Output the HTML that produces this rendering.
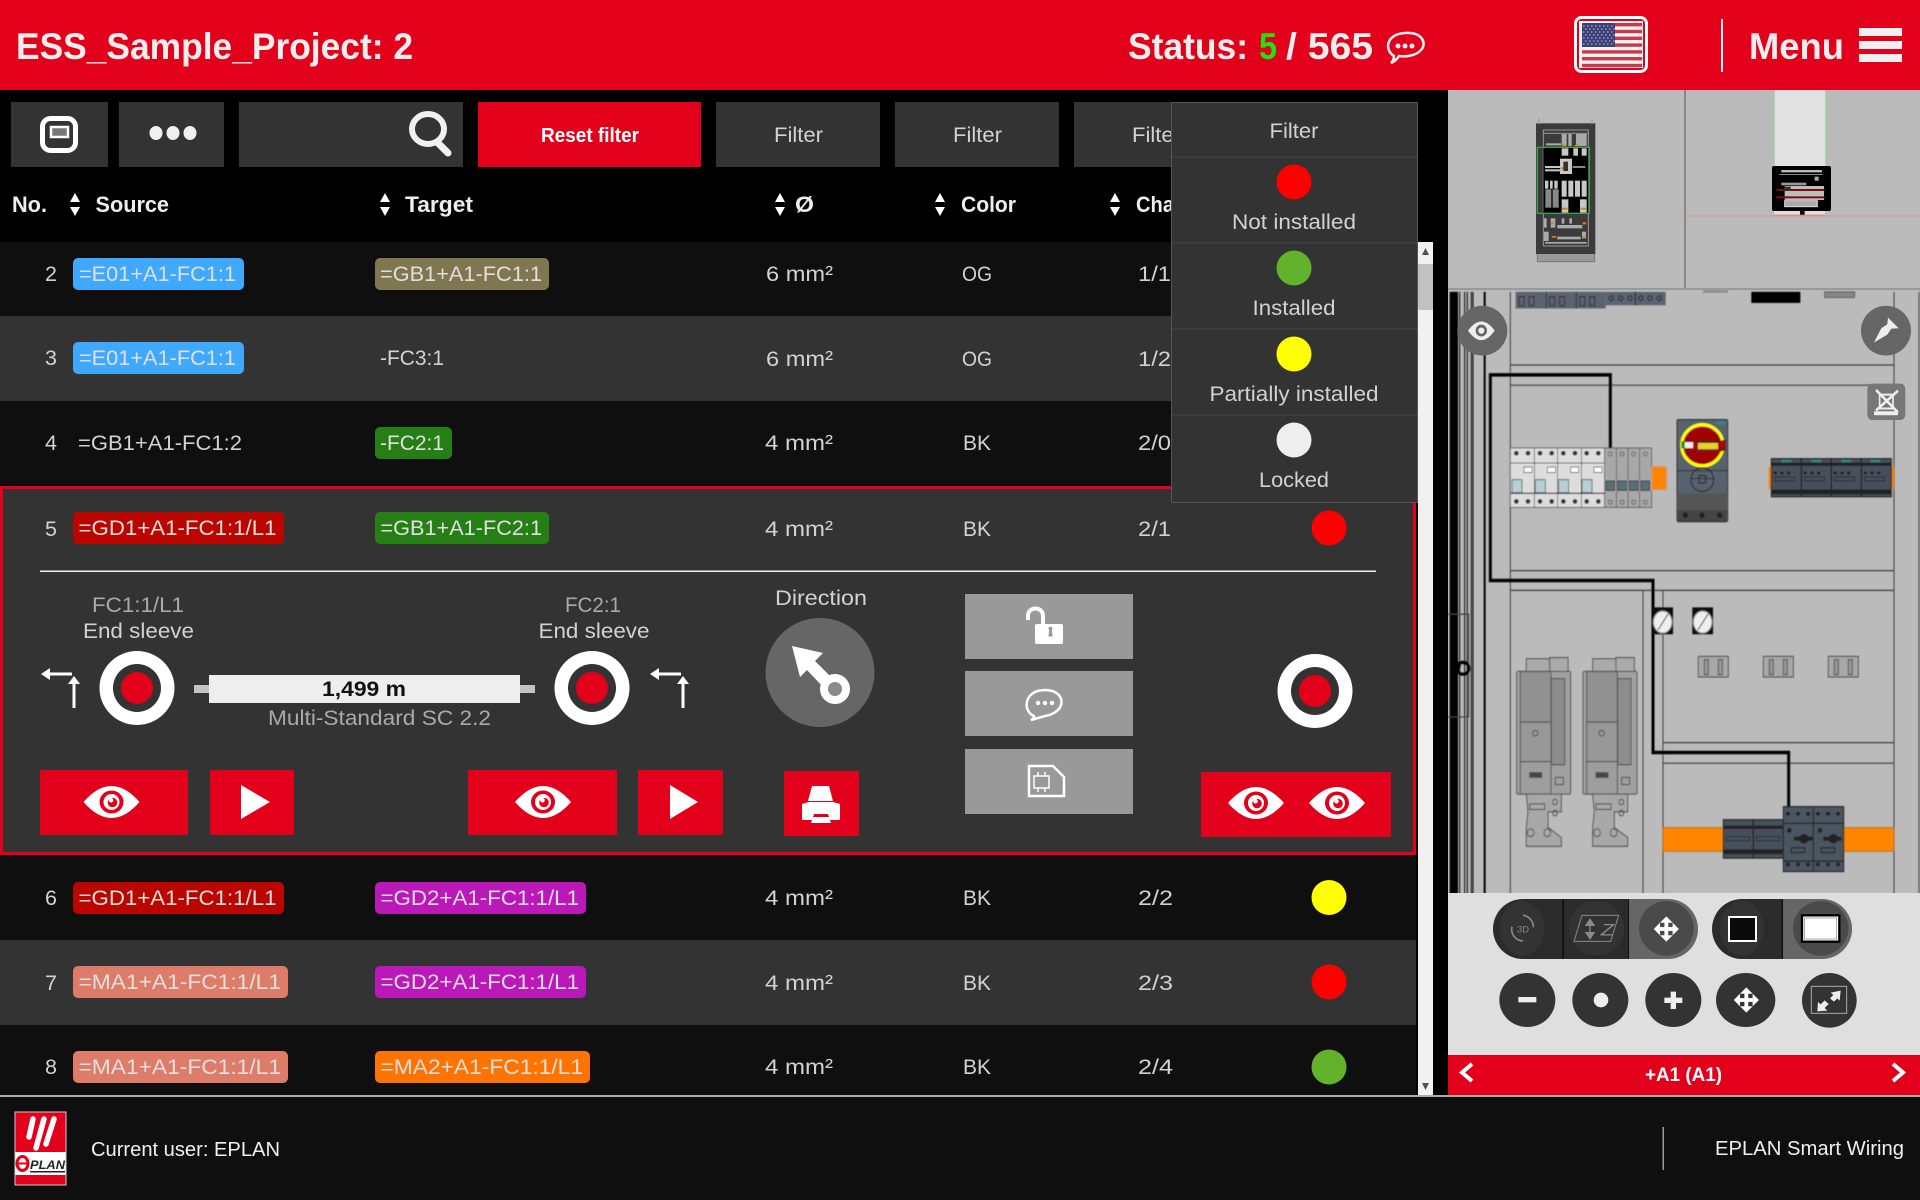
<!DOCTYPE html>
<html lang="en"><head><meta charset="utf-8"><title>ESS_Sample_Project: 2</title>
<style>
html,body{margin:0;padding:0;background:#000;width:1920px;height:1200px;overflow:hidden}
svg{display:block;position:absolute;left:0;top:0}
text{font-family:"Liberation Sans",Arial,sans-serif;font-size:21.5px;fill:#d2d2d2}
.b{font-weight:bold;fill:#eee}
.w{fill:#f0f0f0}
.p{fill:#e0e0e0}
</style></head><body>
<svg width="1920" height="1200" viewBox="0 0 1920 1200" xmlns="http://www.w3.org/2000/svg">
<defs>
<filter id="bl" x="-5%" y="-5%" width="110%" height="110%"><feGaussianBlur stdDeviation="0.45"/></filter>
<g id="eye"><path d="M-28 0Q-14-16 0-16Q14-16 28 0Q14 16 0 16Q-14 16-28 0Z" fill="#fff"/><ellipse rx="12" ry="11.500" fill="#e2001a"/><circle r="8" fill="#fff"/><circle cx="1" cy=".500" r="4.800" fill="#e2001a"/><circle cx="-.500" cy="-1.800" r="2.300" fill="#fff"/></g>
<g id="ring"><ellipse rx="37.5" ry="37" fill="#fff"/><circle r="24" fill="#333"/><circle r="16" fill="#e2001a"/></g>
<g id="sort"><path d="M0-12L5-3H-5Z" fill="#fff"/><path d="M0 11L5 2H-5Z" fill="#fff"/></g>
<g id="arrows" stroke="#fff" stroke-width="3" fill="#fff"><path d="M8 0H31" fill="none"/><path d="M0 0L9-6V6Z" stroke="none"/><path d="M33 7V34" fill="none"/><path d="M33 2L39 10H27Z" stroke="none"/></g>
<g id="move"><path d="M0-13L13 0L0 13L-13 0Z" fill="#fff"/><g fill="currentColor"><rect x="-6.500" y="-6.500" width="4.500" height="4.500"/><rect x="2" y="-6.500" width="4.500" height="4.500"/><rect x="-6.500" y="2" width="4.500" height="4.500"/><rect x="2" y="2" width="4.500" height="4.500"/></g></g>
<clipPath id="mv"><rect x="1448" y="290" width="472" height="603"/></clipPath>
</defs>

<rect width="1920" height="1200" fill="#000"/>
<!-- header -->
<rect width="1920" height="90" fill="#e2001a"/>
<text x="16" y="59" class="b" style="font-size:37px" textLength="397" lengthAdjust="spacingAndGlyphs">ESS_Sample_Project: 2</text>
<text x="1128" y="59" class="b" style="font-size:37px" textLength="120" lengthAdjust="spacingAndGlyphs">Status:</text>
<text x="1259" y="59" class="b" style="font-size:37px;fill:#22e012" textLength="18" lengthAdjust="spacingAndGlyphs">5</text>
<text x="1286" y="59" class="b" style="font-size:37px" textLength="87" lengthAdjust="spacingAndGlyphs">/ 565</text>
<g fill="none" stroke="#f0f0f0" stroke-width="2.500"><path d="M1394 56C1384 50 1386 34 1405 33C1423 32 1427 44 1421 50C1416 56 1405 57 1399 56Q1396 61 1391 63Q1394 60 1394 56Z"/></g>
<g fill="#f0f0f0"><circle cx="1398" cy="46" r="2.500"/><circle cx="1405" cy="46" r="2.500"/><circle cx="1412" cy="46" r="2.500"/></g>
<rect x="1575.500" y="17.500" width="71" height="54" rx="6" fill="#e2001a" stroke="#fff" stroke-width="3"/>
<rect x="1579" y="21" width="64" height="47" fill="#f4f4f4"/>
<g fill="#c9394a"><rect x="1582" y="23" width="60" height="3.400"/><rect x="1582" y="29.800" width="60" height="3.400"/><rect x="1582" y="36.600" width="60" height="3.400"/><rect x="1582" y="43.400" width="60" height="3.400"/><rect x="1582" y="50.200" width="60" height="3.400"/><rect x="1582" y="57" width="60" height="3.400"/><rect x="1582" y="63.800" width="60" height="3.400"/></g>
<rect x="1582" y="23" width="33" height="24" fill="#3c3f78"/>
<g stroke="#c6c8e0" stroke-width="1" stroke-dasharray="1.500 2.500"><path d="M1583 26H1615M1585 29H1615M1583 32H1615M1585 35H1615M1583 38H1615M1585 41H1615M1583 44H1615"/></g>
<rect x="1721" y="19" width="2" height="53" fill="#f4f4f4"/>
<text x="1749" y="59" class="b" style="font-size:37px" textLength="95" lengthAdjust="spacingAndGlyphs">Menu</text>
<g fill="#f0f0f0"><rect x="1859" y="28" width="43" height="8"/><rect x="1859" y="41" width="43" height="8"/><rect x="1859" y="54" width="43" height="8"/></g>

<!-- toolbar -->
<g fill="#333"><rect x="11" y="102" width="97" height="65"/><rect x="119" y="102" width="105" height="65"/><rect x="239" y="102" width="224" height="65"/><rect x="716" y="102" width="164" height="65"/><rect x="895" y="102" width="164" height="65"/><rect x="1074" y="102" width="165" height="65"/></g>
<rect x="478" y="102" width="223" height="65" fill="#e2001a"/>
<rect x="42.500" y="118.500" width="33" height="32" rx="8" fill="#333" stroke="#fff" stroke-width="5"/>
<rect x="51" y="127" width="17" height="10" fill="#777" stroke="#fff" stroke-width="2.500"/>
<g fill="#f0f0f0"><ellipse cx="156" cy="133" rx="6.500" ry="7"/><ellipse cx="173" cy="133" rx="6.500" ry="7"/><ellipse cx="190" cy="133" rx="6.500" ry="7"/></g>
<ellipse cx="428" cy="129" rx="16" ry="15" fill="none" stroke="#f0f0f0" stroke-width="6"/>
<path d="M437 142L448 153" stroke="#f0f0f0" stroke-width="7" stroke-linecap="round"/>
<text x="541" y="142" class="b" style="font-size:20px;fill:#fff" textLength="98" lengthAdjust="spacingAndGlyphs">Reset filter</text>
<text x="774" y="142" textLength="49" lengthAdjust="spacingAndGlyphs">Filter</text>
<text x="953" y="142" textLength="49" lengthAdjust="spacingAndGlyphs">Filter</text>
<text x="1132" y="142" textLength="49" lengthAdjust="spacingAndGlyphs">Filter</text>

<!-- table header -->
<text x="12" y="212" class="b" style="font-size:22px" textLength="35" lengthAdjust="spacingAndGlyphs">No.</text>
<use href="#sort" x="75" y="205"/>
<text x="95.500" y="212" class="b" style="font-size:22px" textLength="73.500" lengthAdjust="spacingAndGlyphs">Source</text>
<use href="#sort" x="385" y="205"/>
<text x="405" y="212" class="b" style="font-size:22px" textLength="68" lengthAdjust="spacingAndGlyphs">Target</text>
<use href="#sort" x="780" y="205"/>
<text x="795" y="212" class="b" style="font-size:22px" textLength="19" lengthAdjust="spacingAndGlyphs">Ø</text>
<use href="#sort" x="940" y="205"/>
<text x="961" y="212" class="b" style="font-size:22px" textLength="55" lengthAdjust="spacingAndGlyphs">Color</text>
<use href="#sort" x="1115" y="205"/>
<text x="1136" y="212" class="b" style="font-size:22px" textLength="38" lengthAdjust="spacingAndGlyphs">Cha</text>

<!-- rows -->
<rect x="0" y="242" width="1416" height="74" fill="#0f0f0f"/>
<rect x="0" y="316" width="1416" height="85" fill="#333"/>
<rect x="0" y="401" width="1416" height="85" fill="#0f0f0f"/>
<rect x="0" y="855" width="1416" height="85" fill="#0f0f0f"/>
<rect x="0" y="940" width="1416" height="85" fill="#333"/>
<rect x="0" y="1025" width="1416" height="70" fill="#0f0f0f"/>
<rect x="1.500" y="487.500" width="1413" height="366" fill="#333" stroke="#e2001a" stroke-width="3"/>

<!-- pills -->
<rect x="73" y="258" width="171" height="32" rx="5" fill="#3fa9ff"/>
<rect x="375" y="258" width="174" height="32" rx="5" fill="#80764f"/>
<rect x="73" y="342" width="171" height="32" rx="5" fill="#3fa9ff"/>
<rect x="375" y="427" width="77" height="32" rx="5" fill="#267f14"/>
<rect x="73" y="512" width="211" height="32" rx="5" fill="#bb0600"/>
<rect x="375" y="512" width="174" height="32" rx="5" fill="#267f14"/>
<rect x="73" y="882" width="211" height="32" rx="5" fill="#bb0600"/>
<rect x="375" y="882" width="211" height="32" rx="5" fill="#bb18b9"/>
<rect x="73" y="966" width="215" height="32" rx="5" fill="#dd7c68"/>
<rect x="375" y="966" width="211" height="32" rx="5" fill="#bb18b9"/>
<rect x="73" y="1051" width="215" height="32" rx="5" fill="#dd7c68"/>
<rect x="375" y="1051" width="215" height="32" rx="5" fill="#ff7300"/>

<!-- row text -->
<g text-anchor="end"><text x="57" y="281">2</text><text x="57" y="365">3</text><text x="57" y="450">4</text><text x="57" y="536">5</text><text x="57" y="905">6</text><text x="57" y="990">7</text><text x="57" y="1074">8</text></g>

<text x="79" y="281" class="p" textLength="157" lengthAdjust="spacingAndGlyphs">=E01+A1-FC1:1</text>
<text x="380" y="281" class="p" textLength="162" lengthAdjust="spacingAndGlyphs">=GB1+A1-FC1:1</text>
<text x="79" y="365" class="p" textLength="157" lengthAdjust="spacingAndGlyphs">=E01+A1-FC1:1</text>
<text x="380" y="365" textLength="64" lengthAdjust="spacingAndGlyphs">-FC3:1</text>
<text x="78" y="450" textLength="164" lengthAdjust="spacingAndGlyphs">=GB1+A1-FC1:2</text>
<text x="380" y="450" class="p" textLength="64" lengthAdjust="spacingAndGlyphs">-FC2:1</text>
<text x="78.500" y="535" class="p" textLength="198" lengthAdjust="spacingAndGlyphs">=GD1+A1-FC1:1/L1</text>
<text x="380.500" y="535" class="p" textLength="161.500" lengthAdjust="spacingAndGlyphs">=GB1+A1-FC2:1</text>
<text x="78.500" y="905" class="p" textLength="198" lengthAdjust="spacingAndGlyphs">=GD1+A1-FC1:1/L1</text>
<text x="380.500" y="905" class="p" textLength="198.500" lengthAdjust="spacingAndGlyphs">=GD2+A1-FC1:1/L1</text>
<text x="78.500" y="989" class="p" textLength="202.500" lengthAdjust="spacingAndGlyphs">=MA1+A1-FC1:1/L1</text>
<text x="380.500" y="989" class="p" textLength="198.500" lengthAdjust="spacingAndGlyphs">=GD2+A1-FC1:1/L1</text>
<text x="78.500" y="1074" class="p" textLength="202.500" lengthAdjust="spacingAndGlyphs">=MA1+A1-FC1:1/L1</text>
<text x="380.500" y="1074" class="p" textLength="202.500" lengthAdjust="spacingAndGlyphs">=MA2+A1-FC1:1/L1</text>

<g>
<text x="766" y="281" textLength="67" lengthAdjust="spacingAndGlyphs">6 mm²</text><text x="962" y="281" textLength="30" lengthAdjust="spacingAndGlyphs">OG</text><text x="1138" y="281" textLength="33" lengthAdjust="spacingAndGlyphs">1/1</text>
<text x="766" y="366" textLength="67" lengthAdjust="spacingAndGlyphs">6 mm²</text><text x="962" y="366" textLength="30" lengthAdjust="spacingAndGlyphs">OG</text><text x="1138" y="366" textLength="33" lengthAdjust="spacingAndGlyphs">1/2</text>
<text x="765" y="450" textLength="68" lengthAdjust="spacingAndGlyphs">4 mm²</text><text x="963" y="450" textLength="28" lengthAdjust="spacingAndGlyphs">BK</text><text x="1138" y="450" textLength="33" lengthAdjust="spacingAndGlyphs">2/0</text>
<text x="765" y="536" textLength="68" lengthAdjust="spacingAndGlyphs">4 mm²</text><text x="963" y="536" textLength="28" lengthAdjust="spacingAndGlyphs">BK</text><text x="1138" y="536" textLength="33" lengthAdjust="spacingAndGlyphs">2/1</text>
<text x="765" y="905" textLength="68" lengthAdjust="spacingAndGlyphs">4 mm²</text><text x="963" y="905" textLength="28" lengthAdjust="spacingAndGlyphs">BK</text><text x="1138" y="905" textLength="35" lengthAdjust="spacingAndGlyphs">2/2</text>
<text x="765" y="990" textLength="68" lengthAdjust="spacingAndGlyphs">4 mm²</text><text x="963" y="990" textLength="28" lengthAdjust="spacingAndGlyphs">BK</text><text x="1138" y="990" textLength="35" lengthAdjust="spacingAndGlyphs">2/3</text>
<text x="765" y="1074" textLength="68" lengthAdjust="spacingAndGlyphs">4 mm²</text><text x="963" y="1074" textLength="28" lengthAdjust="spacingAndGlyphs">BK</text><text x="1138" y="1074" textLength="35" lengthAdjust="spacingAndGlyphs">2/4</text>
</g>
<circle cx="1329" cy="528" r="17.500" fill="#f00"/>
<circle cx="1329" cy="897.500" r="17.500" fill="#ff0"/>
<circle cx="1329" cy="982" r="17.500" fill="#f00"/>
<circle cx="1329" cy="1067" r="17.500" fill="#62b22b"/>

<!-- expanded row -->
<rect x="40" y="570.500" width="1336" height="1.500" fill="#eee"/>
<text x="92" y="612" style="fill:#aaa" textLength="92" lengthAdjust="spacingAndGlyphs">FC1:1/L1</text>
<text x="83" y="638" textLength="111" lengthAdjust="spacingAndGlyphs">End sleeve</text>
<text x="565" y="612" style="fill:#aaa" textLength="56" lengthAdjust="spacingAndGlyphs">FC2:1</text>
<text x="538.500" y="638" textLength="111" lengthAdjust="spacingAndGlyphs">End sleeve</text>
<use href="#arrows" x="41" y="674"/><use href="#arrows" x="650" y="674"/>
<use href="#ring" x="137" y="688"/><use href="#ring" x="592" y="688"/>
<rect x="194" y="685" width="341" height="8" fill="#c4c4c4"/>
<rect x="209" y="675" width="311" height="28" fill="#eee"/>
<text x="322" y="696" class="b" style="font-size:21px;fill:#111" textLength="84" lengthAdjust="spacingAndGlyphs">1,499 m</text>
<text x="268" y="725" style="fill:#aaa" textLength="223" lengthAdjust="spacingAndGlyphs">Multi-Standard SC 2.2</text>
<g fill="#e2001a"><rect x="40" y="770" width="148" height="65"/><rect x="210" y="770" width="84" height="65"/><rect x="468" y="770" width="149" height="65"/><rect x="638" y="770" width="85" height="65"/><rect x="784" y="771" width="75" height="65"/><rect x="1201" y="772" width="190" height="65"/></g>
<use href="#eye" x="111.500" y="802"/><use href="#eye" x="543" y="802"/>
<use href="#eye" x="1256" y="803"/><use href="#eye" x="1337" y="803"/>
<path d="M241 785L270 802L241 819Z" fill="#fff"/><path d="M670 785L698 802L670 819Z" fill="#fff"/>
<path d="M812 786H829L833 801H808ZM802 804L809 802H833L840 804V820H830L828 814H814L812 820H802Z" fill="#fff"/>
<path d="M813 817H829L831 823H811Z" fill="#fff"/>
<text x="775" y="605" textLength="92" lengthAdjust="spacingAndGlyphs">Direction</text>
<ellipse cx="820" cy="672.500" rx="54.500" ry="54.500" fill="#666"/>
<path d="M792 646L823 653L815 661L833 679L824 688L807 670L800 677Z" fill="#fff"/>
<circle cx="835" cy="689" r="11" fill="#8a8a8a" stroke="#fff" stroke-width="8"/>
<g fill="#999"><rect x="965" y="594" width="168" height="65"/><rect x="965" y="671" width="168" height="65"/><rect x="965" y="749" width="168" height="65"/></g>
<path d="M1028 620V616C1028 606 1043 606 1043 616V625" fill="none" stroke="#fff" stroke-width="4"/>
<rect x="1035" y="624" width="28" height="20" rx="2" fill="#fff"/>
<path d="M1049 628a1.800 1.800 0 0 1 3 0v1l-.7 1 .7 6h-3l.7-6-.7-1Z" fill="#999" stroke="#999"/>
<path d="M1034 716C1022 711 1024 690 1045 690C1066 690 1068 712 1045 716Q1038 718 1031 720Q1035 718 1034 716Z" fill="none" stroke="#fff" stroke-width="2.500"/>
<g fill="#fff"><circle cx="1038" cy="703" r="2.200"/><circle cx="1045" cy="703" r="2.200"/><circle cx="1052" cy="703" r="2.200"/></g>
<path d="M1029 766H1053L1064 777V796H1029Z" fill="none" stroke="#fff" stroke-width="2.500"/>
<rect x="1034" y="776" width="15" height="12" fill="none" stroke="#fff" stroke-width="1.500"/>
<path d="M1038 772V776M1045 772V776M1038 788V792M1045 788V792" stroke="#fff" stroke-width="1.500"/>
<use href="#ring" x="1315" y="691"/>

<!-- scrollbar -->
<rect x="1418" y="242" width="15" height="853" fill="#f1f1f1"/>
<rect x="1418" y="264" width="15" height="46" fill="#c1c1c1"/>
<path d="M1425.500 248L1429 255H1422Z" fill="#505050"/>
<path d="M1425.500 1090L1429 1083H1422Z" fill="#505050"/>

<!-- filter popup -->
<rect x="1171.500" y="102.500" width="246" height="400" fill="#333" stroke="#555"/>
<path d="M1172 157H1417M1172 243H1417M1172 329H1417M1172 415H1417" stroke="#555" stroke-width="1" stroke-dasharray="1 1"/>
<text x="1269.500" y="138" textLength="49" lengthAdjust="spacingAndGlyphs">Filter</text>
<circle cx="1294" cy="182" r="17.500" fill="#f00"/>
<text x="1232" y="229" textLength="124" lengthAdjust="spacingAndGlyphs">Not installed</text>
<circle cx="1294" cy="268" r="17.500" fill="#62b22b"/>
<text x="1252.500" y="315" textLength="83" lengthAdjust="spacingAndGlyphs">Installed</text>
<circle cx="1294" cy="354" r="17.500" fill="#ff0"/>
<text x="1209.500" y="401" textLength="169" lengthAdjust="spacingAndGlyphs">Partially installed</text>
<circle cx="1294" cy="440" r="17.500" fill="#eee"/>
<text x="1259" y="487" textLength="70" lengthAdjust="spacingAndGlyphs">Locked</text>

<!-- right panel -->
<rect x="1448" y="90" width="472" height="803" fill="#bbb"/>
<rect x="1684" y="90" width="2" height="199" fill="#888"/>
<rect x="1448" y="288" width="472" height="2" fill="#999"/>
<!-- mini cabinet -->
<g filter="url(#bl)" transform="translate(1520 110) scale(.33333)">
<rect x="52" y="430" width="172" height="25" fill="#999" stroke="#777" stroke-width="3"/>
<rect x="48" y="40" width="178" height="392" fill="#3b3b3b"/>
<path d="M56 26V42M216 26V42" stroke="#999" stroke-width="4"/>
<g fill="none" stroke="#999" stroke-width="3"><path d="M70 60H205V408H70Z"/><path d="M70 70H205"/></g>
<g fill="#aaa"><rect x="125" y="72" width="15" height="36"/><rect x="145" y="72" width="10" height="36"/><rect x="168" y="72" width="32" height="36"/><rect x="78" y="100" width="45" height="6"/></g>
<rect x="70" y="112" width="135" height="198" fill="#060606"/>
<g fill="#c8c8c8"><rect x="125" y="115" width="20" height="22"/><rect x="160" y="115" width="14" height="22"/><rect x="185" y="115" width="15" height="22"/><rect x="120" y="146" width="36" height="46"/><rect x="75" y="212" width="10" height="24"/><rect x="90" y="212" width="8" height="24"/><rect x="103" y="212" width="10" height="24"/><rect x="125" y="212" width="15" height="48"/><rect x="145" y="212" width="15" height="48"/><rect x="165" y="212" width="15" height="48"/><rect x="185" y="212" width="15" height="48"/><rect x="125" y="268" width="20" height="40"/><rect x="180" y="268" width="20" height="40"/><rect x="75" y="168" width="45" height="6"/><rect x="75" y="178" width="45" height="6"/></g>
<g fill="#888"><rect x="76" y="238" width="18" height="55"/><rect x="98" y="238" width="18" height="55"/><rect x="158" y="168" width="38" height="6"/></g>
<rect x="130" y="155" width="14" height="28" fill="#333"/>
<g fill="#d9801c"><rect x="125" y="293" width="18" height="6"/><rect x="182" y="293" width="16" height="6"/><rect x="125" y="104" width="14" height="5"/><rect x="165" y="104" width="12" height="5"/><rect x="122" y="172" width="8" height="6"/></g>
<rect x="52" y="112" width="156" height="198" fill="none" stroke="#3aa04a" stroke-width="4"/>
<g fill="#aaa"><rect x="72" y="325" width="8" height="28"/><rect x="92" y="325" width="14" height="28"/><rect x="125" y="325" width="8" height="16"/><rect x="148" y="325" width="8" height="16"/><rect x="112" y="345" width="75" height="10"/><rect x="72" y="365" width="14" height="28"/><rect x="112" y="380" width="70" height="8"/><rect x="186" y="365" width="12" height="20"/><rect x="75" y="396" width="125" height="5"/></g>
<g fill="#d9801c"><rect x="92" y="337" width="10" height="6"/><rect x="188" y="337" width="10" height="6"/><rect x="95" y="378" width="14" height="5"/><rect x="186" y="378" width="10" height="5"/></g>
</g>
<!-- mini right -->
<rect x="1774" y="90" width="51" height="126" fill="#e1e1e1"/>
<path d="M1774.500 90V166M1825.500 90V166" stroke="#a5d8a5" stroke-width="1"/>
<rect x="1686" y="215.500" width="234" height="1" fill="#d69a9a"/>
<rect x="1774" y="214.500" width="51" height="1.500" fill="#ea8a8a"/>
<g filter="url(#bl)" transform="translate(1448 80) scale(.33333)">
<rect x="972" y="258" width="177" height="135" rx="6" fill="#060606"/>
<rect x="1000" y="270" width="122" height="7" fill="#bbb"/>
<rect x="994" y="282" width="130" height="3" fill="#888"/>
<rect x="1000" y="308" width="75" height="8" fill="#999"/>
<rect x="1100" y="290" width="12" height="12" fill="#aaa"/>
<rect x="1010" y="318" width="118" height="42" fill="#bdbdbd"/>
<rect x="985" y="327" width="145" height="6" fill="#7a0f0f"/>
<rect x="985" y="349" width="145" height="6" fill="#7a0f0f"/>
<rect x="1008" y="320" width="20" height="12" fill="#333"/>
<rect x="1010" y="362" width="98" height="18" fill="#aaa" stroke="#ddd" stroke-width="3"/>
<rect x="1056" y="393" width="14" height="11" fill="#111"/>
</g>

<!-- main view -->
<g clip-path="url(#mv)"><g filter="url(#bl)"><g transform="translate(1448 280) scale(.33333 .39541)">
<rect x="5" y="30" width="25" height="1530" fill="#000"/>
<g stroke="#000" fill="none"><path d="M35 30V1560M50 30V1560M58 30V1560M70 30V1560M75 30V1560" stroke-width="3"/><path d="M110 30V1560" stroke-width="6"/></g>
<g stroke="#3d3d3d" fill="none" stroke-width="3"><path d="M187 30V1560M1338 30V1560M1413 30V1560M585 785V1560M645 785V1560M187 215H1338M187 266H1338M187 735H1338M187 785H1338M645 1170H1338M645 1222H1338"/><path d="M0 845H62V1105H0"/></g>
<ellipse cx="45" cy="982" rx="18" ry="15" fill="none" stroke="#000" stroke-width="8"/>
<ellipse cx="22" cy="976" rx="16" ry="13" fill="#000"/>
<!-- top strip -->
<rect x="203" y="30" width="270" height="42" fill="#5b6470"/>
<g fill="none" stroke="#333" stroke-width="3"><path d="M295 30V72M385 30V72M213 42H228V65H213ZM243 42H258V65H243ZM305 42H320V65H305ZM335 42H350V65H335ZM395 42H410V65H395ZM425 42H440V65H425Z"/></g>
<rect x="473" y="30" width="180" height="34" fill="#5b6470"/>
<g fill="none" stroke="#222" stroke-width="3"><circle cx="490" cy="46" r="6"/><circle cx="518" cy="46" r="6"/><circle cx="546" cy="46" r="6"/><circle cx="578" cy="46" r="6"/><circle cx="606" cy="46" r="6"/><circle cx="634" cy="46" r="6"/><path d="M562 30V64"/></g>
<rect x="910" y="30" width="147" height="28" fill="#000"/>
<rect x="1130" y="30" width="90" height="14" fill="#888" stroke="#444" stroke-width="2"/>
<rect x="765" y="26" width="75" height="6" fill="#888"/>
<!-- wire -->
<path d="M487 425V240H127V760H615V1195H1022V1335" fill="none" stroke="#000" stroke-width="9"/>
<!-- breakers -->
<rect x="187" y="425" width="283" height="150" fill="#ddd" stroke="#444" stroke-width="2"/>
<g fill="#333">
<ellipse cx="205" cy="438" rx="7" ry="6"/><ellipse cx="240" cy="438" rx="7" ry="6"/><ellipse cx="276" cy="438" rx="7" ry="6"/><ellipse cx="311" cy="438" rx="7" ry="6"/><ellipse cx="346" cy="438" rx="7" ry="6"/><ellipse cx="381" cy="438" rx="7" ry="6"/><ellipse cx="416" cy="438" rx="7" ry="6"/><ellipse cx="451" cy="438" rx="7" ry="6"/>
<ellipse cx="205" cy="560" rx="7" ry="6"/><ellipse cx="240" cy="560" rx="7" ry="6"/><ellipse cx="276" cy="560" rx="7" ry="6"/><ellipse cx="311" cy="560" rx="7" ry="6"/><ellipse cx="346" cy="560" rx="7" ry="6"/><ellipse cx="381" cy="560" rx="7" ry="6"/><ellipse cx="416" cy="560" rx="7" ry="6"/><ellipse cx="451" cy="560" rx="7" ry="6"/>
<rect x="258" y="425" width="2" height="150"/><rect x="328" y="425" width="2" height="150"/><rect x="399" y="425" width="2" height="150"/>
<rect x="187" y="462" width="283" height="2"/><rect x="187" y="538" width="283" height="3"/>
</g>
<g fill="#fff" stroke="#444" stroke-width="2"><rect x="228" y="473" width="24" height="14"/><rect x="298" y="473" width="24" height="14"/><rect x="368" y="473" width="24" height="14"/><rect x="438" y="473" width="24" height="14"/></g>
<g fill="#b7cfd6" stroke="#333" stroke-width="2"><rect x="192" y="505" width="30" height="33"/><rect x="262" y="505" width="30" height="33"/><rect x="332" y="505" width="30" height="33"/><rect x="402" y="505" width="30" height="33"/></g>
<rect x="470" y="425" width="141" height="150" fill="#a8a8a8" stroke="#444" stroke-width="2"/>
<g fill="none" stroke="#444" stroke-width="2"><path d="M505 425V575M540 425V575M575 425V575"/><ellipse cx="487" cy="440" rx="6" ry="5"/><ellipse cx="522" cy="440" rx="6" ry="5"/><ellipse cx="557" cy="440" rx="6" ry="5"/><ellipse cx="592" cy="440" rx="6" ry="5"/><ellipse cx="487" cy="562" rx="6" ry="5"/><ellipse cx="522" cy="562" rx="6" ry="5"/><ellipse cx="557" cy="562" rx="6" ry="5"/><ellipse cx="592" cy="562" rx="6" ry="5"/></g>
<g fill="#5a7078" stroke="#222" stroke-width="2"><rect x="474" y="508" width="26" height="24"/><rect x="509" y="508" width="26" height="24"/><rect x="544" y="508" width="26" height="24"/><rect x="579" y="508" width="26" height="24"/></g>
<rect x="611" y="471" width="45" height="60" fill="#ff8400" stroke="#aaa" stroke-width="2"/>
<!-- switch -->
<rect x="687" y="353" width="152" height="258" rx="4" fill="#59626e" stroke="#333" stroke-width="3"/>
<rect x="687" y="540" width="152" height="42" fill="#555"/>
<rect x="690" y="582" width="146" height="28" fill="#444"/>
<g fill="#222"><ellipse cx="712" cy="595" rx="8" ry="7"/><ellipse cx="762" cy="595" rx="8" ry="7"/><ellipse cx="815" cy="595" rx="8" ry="7"/></g>
<path d="M687 482H839" stroke="#333" stroke-width="3"/>
<ellipse cx="763" cy="418" rx="62" ry="52" fill="#a00000" stroke="#ff0" stroke-width="9"/>
<rect x="700" y="408" width="20" height="18" fill="#1f8f1f"/>
<path d="M712 408H815L833 405V430L815 433H720Z" fill="#b00000" stroke="#222" stroke-width="2"/>
<rect x="710" y="410" width="25" height="15" fill="#eee"/>
<rect x="749" y="411" width="62" height="18" fill="#e8d22a" stroke="#333" stroke-width="2"/>
<ellipse cx="763" cy="505" rx="34" ry="30" fill="none" stroke="#222" stroke-width="3"/>
<rect x="753" y="495" width="20" height="18" fill="none" stroke="#222" stroke-width="3"/>
<path d="M730 502H800" stroke="#222" stroke-width="2"/>
<rect x="802" y="358" width="30" height="7" fill="#2a8a8a"/>
<!-- contactors top right -->
<rect x="962" y="472" width="376" height="58" fill="#ff8400"/>
<rect x="970" y="452" width="360" height="96" fill="#46505c" stroke="#222" stroke-width="3"/>
<path d="M1060 452V548M1150 452V548M1240 452V548" stroke="#111" stroke-width="3"/>
<g fill="#222"><rect x="972" y="462" width="356" height="8"/><rect x="972" y="530" width="356" height="12"/></g>
<g fill="#2a8a8a"><rect x="1000" y="455" width="30" height="6"/><rect x="1090" y="455" width="30" height="6"/><rect x="1180" y="455" width="30" height="6"/><rect x="1268" y="455" width="30" height="6"/></g>
<g fill="none" stroke="#222" stroke-width="2"><rect x="980" y="498" width="60" height="10"/><rect x="1070" y="498" width="60" height="10"/><rect x="1160" y="498" width="60" height="10"/><rect x="1250" y="498" width="60" height="10"/></g>
<g fill="#222"><ellipse cx="982" cy="488" rx="5" ry="4"/><ellipse cx="1002" cy="488" rx="5" ry="4"/><ellipse cx="1022" cy="488" rx="5" ry="4"/><ellipse cx="1072" cy="488" rx="5" ry="4"/><ellipse cx="1092" cy="488" rx="5" ry="4"/><ellipse cx="1112" cy="488" rx="5" ry="4"/><ellipse cx="1162" cy="488" rx="5" ry="4"/><ellipse cx="1182" cy="488" rx="5" ry="4"/><ellipse cx="1202" cy="488" rx="5" ry="4"/><ellipse cx="1252" cy="488" rx="5" ry="4"/><ellipse cx="1272" cy="488" rx="5" ry="4"/><ellipse cx="1292" cy="488" rx="5" ry="4"/></g>
<!-- knobs -->
<rect x="613" y="828" width="62" height="68" fill="#111"/><rect x="733" y="828" width="62" height="68" fill="#111"/>
<circle cx="644" cy="865" r="28" fill="#eee" stroke="#888" stroke-width="3"/><circle cx="764" cy="865" r="28" fill="#eee" stroke="#888" stroke-width="3"/>
<path d="M630 885L660 845M750 885L780 845" stroke="#444" stroke-width="3"/>
<g fill="#a8a8a8" stroke="#555" stroke-width="3"><rect x="751" y="952" width="90" height="52"/><rect x="946" y="952" width="90" height="52"/><rect x="1141" y="952" width="90" height="52"/></g>
<g fill="#999" stroke="#555" stroke-width="3"><rect x="769" y="960" width="12" height="38"/><rect x="811" y="960" width="12" height="38"/><rect x="964" y="960" width="12" height="38"/><rect x="1006" y="960" width="12" height="38"/><rect x="1159" y="960" width="12" height="38"/><rect x="1201" y="960" width="12" height="38"/></g>
<!-- drives -->
<g id="drv" stroke="#555" stroke-width="3">
<path d="M235 958H305V992H235Z" fill="#aaa"/><rect x="305" y="955" width="55" height="37" fill="#aaa"/>
<rect x="206" y="990" width="162" height="310" rx="4" fill="#a0a0a0"/>
<rect x="217" y="990" width="92" height="128" fill="#919191"/>
<rect x="217" y="1118" width="92" height="100" fill="#989898"/>
<rect x="217" y="1218" width="92" height="82" fill="#9e9e9e"/>
<rect x="310" y="1008" width="40" height="218" fill="#8d8d8d"/>
<rect x="322" y="1258" width="24" height="18" fill="none"/>
<path d="M235 1300H340V1345H300V1385L340 1410V1432H235V1385L240 1345L235 1300Z" fill="#a8a8a8"/>
<ellipse cx="262" cy="1146" rx="8" ry="7" fill="none"/>
<rect x="245" y="1246" width="36" height="12" fill="#444"/>
<circle cx="248" cy="1398" r="10" fill="none"/><circle cx="298" cy="1398" r="10" fill="none"/>
<circle cx="321" cy="1320" r="7" fill="none"/><circle cx="321" cy="1348" r="7" fill="none"/>
<rect x="245" y="1325" width="45" height="14" fill="none"/>
</g>
<use href="#drv" x="199"/>
<!-- bottom rail -->
<rect x="645" y="1385" width="693" height="60" fill="#ff8400" stroke="#ad6a15" stroke-width="2"/>
<rect x="826" y="1365" width="180" height="97" fill="#46505c" stroke="#222" stroke-width="3"/>
<path d="M916 1365V1462" stroke="#111" stroke-width="3"/>
<g fill="#222"><rect x="828" y="1380" width="176" height="8"/><rect x="828" y="1440" width="176" height="12"/></g>
<g fill="none" stroke="#222" stroke-width="2"><rect x="835" y="1408" width="70" height="10"/><rect x="925" y="1408" width="70" height="10"/></g>
<rect x="1006" y="1332" width="181" height="164" fill="#4a5460" stroke="#222" stroke-width="3"/>
<path d="M1096 1332V1496M1006 1374H1187M1006 1470H1187" stroke="#222" stroke-width="3"/>
<g fill="#222"><ellipse cx="1024" cy="1392" rx="7" ry="6"/><ellipse cx="1116" cy="1392" rx="7" ry="6"/><rect x="1038" y="1408" width="55" height="10"/><rect x="1126" y="1408" width="55" height="10"/><ellipse cx="1068" cy="1413" rx="14" ry="12"/><ellipse cx="1156" cy="1413" rx="14" ry="12"/><ellipse cx="1020" cy="1350" rx="6" ry="5"/><ellipse cx="1050" cy="1350" rx="6" ry="5"/><ellipse cx="1080" cy="1350" rx="6" ry="5"/><ellipse cx="1110" cy="1350" rx="6" ry="5"/><ellipse cx="1140" cy="1350" rx="6" ry="5"/><ellipse cx="1170" cy="1350" rx="6" ry="5"/><ellipse cx="1020" cy="1478" rx="6" ry="5"/><ellipse cx="1050" cy="1478" rx="6" ry="5"/><ellipse cx="1080" cy="1478" rx="6" ry="5"/><ellipse cx="1110" cy="1478" rx="6" ry="5"/><ellipse cx="1140" cy="1478" rx="6" ry="5"/><ellipse cx="1170" cy="1478" rx="6" ry="5"/></g>
<g fill="none" stroke="#222" stroke-width="3"><rect x="1030" y="1436" width="40" height="12"/><rect x="1120" y="1436" width="40" height="12"/></g>
</g></g>
<!-- overlay buttons -->
<g transform="translate(1448 280) scale(.33333 .39541)">
<ellipse cx="103" cy="128" rx="75" ry="63" fill="#666"/>
<path d="M60 128Q80 105 100 105Q120 105 140 128Q120 152 100 152Q80 152 60 128Z" fill="#eee"/>
<ellipse cx="100" cy="128" rx="17" ry="15" fill="#666"/><ellipse cx="100" cy="128" rx="9" ry="8" fill="#eee"/>
<ellipse cx="1314" cy="128" rx="75" ry="63" fill="#666"/>
<path d="M1320 95L1352 122L1330 123L1318 138L1278 158L1300 122L1318 112Z" fill="#eee"/>
<rect x="1258" y="262" width="114" height="92" rx="14" fill="#777"/>
<path d="M1284 278L1350 335M1350 280L1284 330" stroke="#eee" stroke-width="7"/>
<path d="M1295 290H1335V325H1295Z" fill="none" stroke="#eee" stroke-width="5"/>
<rect x="1278" y="332" width="72" height="10" fill="#eee"/>
</g></g>

<!-- controls -->
<rect x="1448" y="893" width="472" height="162" fill="#dfdfdf"/>
<g transform="translate(1448 880) scale(.33333)">
<path d="M225 57H345V237H225A90 90 0 0 1 225 57Z" fill="#2b2b2b"/>
<rect x="343" y="57" width="5" height="180" fill="#111"/>
<rect x="348" y="57" width="192" height="180" fill="#2b2b2b"/>
<rect x="540" y="57" width="4" height="180" fill="#111"/>
<path d="M544 57H660A90 90 0 0 1 660 237H544Z" fill="#666"/>
<ellipse cx="222" cy="145" rx="66" ry="82" fill="#333"/>
<ellipse cx="445" cy="145" rx="83" ry="82" fill="#333"/>
<ellipse cx="655" cy="145" rx="82" ry="82" fill="#4a4a4a"/>
<g fill="none" stroke="#888" stroke-width="5"><path d="M192 140A35 35 0 0 0 225 183"/><path d="M225 106A35 35 0 0 1 256 142"/></g>
<text x="207" y="158" style="font-size:28px;fill:#888" textLength="36" lengthAdjust="spacingAndGlyphs">3D</text>
<path d="M402 106H512L488 184H378Z" fill="none" stroke="#888" stroke-width="3"/>
<path d="M426 122V170M426 118L414 136H438ZM426 176L414 158H438Z" fill="#8a8a8a" stroke="#8a8a8a" stroke-width="4"/>
<text x="458" y="166" style="font-size:50px;fill:#888;font-style:italic" textLength="40" lengthAdjust="spacingAndGlyphs">Z</text>
<use href="#move" transform="translate(655 147) scale(2.900)" style="color:#4a4a4a"/>
<path d="M882 57H1002V237H882A90 90 0 0 1 882 57Z" fill="#2b2b2b"/>
<rect x="1001" y="57" width="5" height="180" fill="#111"/>
<path d="M1006 57H1122A90 90 0 0 1 1122 237H1006Z" fill="#666"/>
<ellipse cx="882" cy="145" rx="66" ry="82" fill="#333"/>
<ellipse cx="1118" cy="145" rx="83" ry="82" fill="#4a4a4a"/>
<rect x="843" y="111" width="81" height="72" fill="#0a0a0a" stroke="#fff" stroke-width="6"/>
<rect x="1062" y="106" width="112" height="79" fill="#fff" stroke="#000" stroke-width="7"/>
<rect x="1070" y="114" width="96" height="63" fill="#fff" stroke="#000" stroke-width="1"/>
<g fill="#333"><ellipse cx="238" cy="360" rx="84" ry="81"/><ellipse cx="457" cy="360" rx="84" ry="81"/><ellipse cx="676" cy="360" rx="84" ry="81"/><ellipse cx="893" cy="360" rx="89" ry="81"/><ellipse cx="1144" cy="361" rx="82" ry="82"/></g>
<rect x="211" y="351" width="54" height="16" fill="#eee"/>
<circle cx="459" cy="360" r="22" fill="#eee"/>
<path d="M668 335H684V353H703V369H684V387H668V369H649V353H668Z" fill="#eee"/>
<use href="#move" transform="translate(895 360) scale(2.900)" style="color:#333"/>
<rect x="1090" y="319" width="106" height="81" fill="none" stroke="#aaa" stroke-width="3"/>
<path d="M1178 332L1148 338L1156 345L1146 355L1158 365L1168 355L1175 362ZM1108 394L1138 392L1130 384L1142 372L1130 361L1118 373L1110 366Z" fill="#eee"/>
</g>

<!-- location bar -->
<rect x="1448" y="1055" width="472" height="40" fill="#e2001a"/>
<path d="M1472 1064L1462 1072.500L1472 1081" fill="none" stroke="#fff" stroke-width="4"/>
<path d="M1893 1064L1903 1072.500L1893 1081" fill="none" stroke="#fff" stroke-width="4"/>
<text x="1645" y="1081" class="b" style="font-size:19.500px;fill:#fff" textLength="77" lengthAdjust="spacingAndGlyphs">+A1 (A1)</text>

<!-- footer -->
<rect x="0" y="1097" width="1920" height="103" fill="#0f0f0f"/>
<rect x="0" y="1095" width="1920" height="2" fill="#aaa"/>
<rect x="15" y="1112" width="51" height="73" fill="#e2001a" stroke="#ccc" stroke-width="1"/>
<rect x="15.500" y="1152" width="50" height="23" fill="#fff"/>
<path d="M33 1119L29 1137M44 1119L36 1148M54 1119L46 1144" stroke="#fff" stroke-width="5.500" stroke-linecap="round"/>
<ellipse cx="22.500" cy="1163.500" rx="5.500" ry="7" fill="none" stroke="#e2001a" stroke-width="3"/>
<rect x="17" y="1162.500" width="11" height="2" fill="#e2001a"/>
<text x="30" y="1169" style="font-size:12px;font-weight:bold;font-style:italic;fill:#222" textLength="35" lengthAdjust="spacingAndGlyphs">PLAN</text>
<rect x="30" y="1171" width="35" height="1.500" fill="#222"/>
<text x="91" y="1156" class="w" style="font-size:20px" textLength="189" lengthAdjust="spacingAndGlyphs">Current user: EPLAN</text>
<rect x="1662.500" y="1127" width="1.500" height="43" fill="#999"/>
<text x="1715" y="1155" class="w" style="font-size:20px" textLength="189" lengthAdjust="spacingAndGlyphs">EPLAN Smart Wiring</text>
</svg>
</body></html>
